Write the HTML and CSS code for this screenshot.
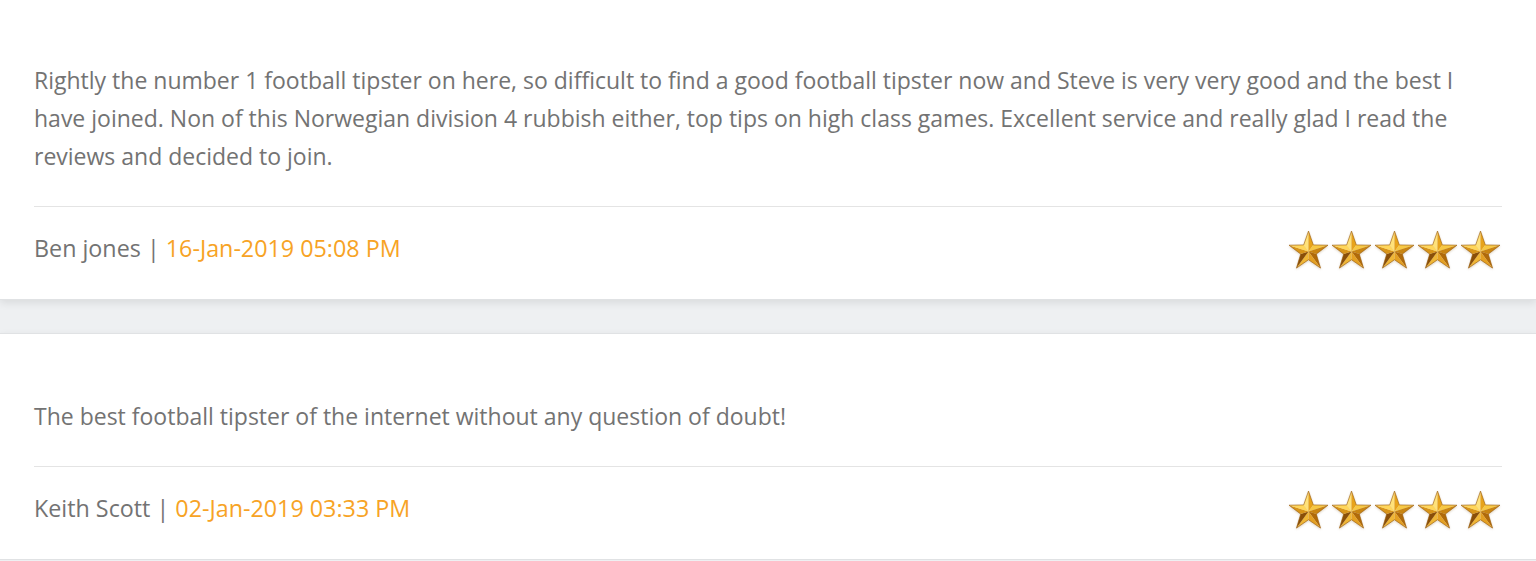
FILE: index.html
```html
<!DOCTYPE html>
<html lang="en">
<head>
<meta charset="utf-8">
<title>Reviews</title>
<link rel="stylesheet" href="styles.css">
</head>
<body>
<svg width="0" height="0" class="defs">
  <defs>
    <g id="star">
      <polygon points="21,21 21,1 16.30,14.53" fill="#ffe27a"/>
      <polygon points="21,21 21,1 25.70,14.53" fill="#e7a31c"/>
      <polygon points="21,21 25.70,14.53 40.02,14.82" fill="#f7c844"/>
      <polygon points="21,21 40.02,14.82 28.61,23.47" fill="#c98512"/>
      <polygon points="21,21 28.61,23.47 32.76,37.18" fill="#b06a0a"/>
      <polygon points="21,21 32.76,37.18 21,29" fill="#e4a022"/>
      <polygon points="21,21 21,29 9.24,37.18" fill="#efb636"/>
      <polygon points="21,21 9.24,37.18 13.39,23.47" fill="#8a4f08"/>
      <polygon points="21,21 13.39,23.47 1.98,14.82" fill="#d8951a"/>
      <polygon points="21,21 1.98,14.82 16.30,14.53" fill="#ffd65a"/>
      <polygon points="21,1 25.70,14.53 40.02,14.82 28.61,23.47 32.76,37.18 21,29 9.24,37.18 13.39,23.47 1.98,14.82 16.30,14.53" fill="none" stroke="#9a5c0a" stroke-width="0.6" stroke-linejoin="round"/>
    </g>
  </defs>
</svg>
<main class="reviews">
  <article class="review">
    <p class="review-text">Rightly the number 1 football tipster on here, so difficult to find a good football tipster now and Steve is very very good and the best I have joined. Non of this Norwegian division 4 rubbish either, top tips on high class games. Excellent service and really glad I read the reviews and decided to join.</p>
    <div class="review-meta">
      <div class="author">Ben jones | <span class="date">16-Jan-2019 05:08 PM</span></div>
      <div class="stars">
        <svg class="star" viewBox="0 0 42 39"><use href="#star"/></svg>
        <svg class="star" viewBox="0 0 42 39"><use href="#star"/></svg>
        <svg class="star" viewBox="0 0 42 39"><use href="#star"/></svg>
        <svg class="star" viewBox="0 0 42 39"><use href="#star"/></svg>
        <svg class="star" viewBox="0 0 42 39"><use href="#star"/></svg>
      </div>
    </div>
  </article>
  <article class="review">
    <p class="review-text">The best football tipster of the internet without any question of doubt!</p>
    <div class="review-meta">
      <div class="author">Keith Scott | <span class="date">02-Jan-2019 03:33 PM</span></div>
      <div class="stars">
        <svg class="star" viewBox="0 0 42 39"><use href="#star"/></svg>
        <svg class="star" viewBox="0 0 42 39"><use href="#star"/></svg>
        <svg class="star" viewBox="0 0 42 39"><use href="#star"/></svg>
        <svg class="star" viewBox="0 0 42 39"><use href="#star"/></svg>
        <svg class="star" viewBox="0 0 42 39"><use href="#star"/></svg>
      </div>
    </div>
  </article>
</main>
</body>
</html>
```
FILE: styles.css
```css
html, body {
  margin: 0;
  padding: 0;
}
body {
  background: #eef0f2;
  font-family: "Open Sans", "Liberation Sans", sans-serif;
  font-weight: 400;
  color: #737373;
  overflow: hidden;
}
.defs {
  position: absolute;
  width: 0;
  height: 0;
}
.reviews {
  display: flex;
  flex-direction: column;
  gap: 33px;
  margin-top: -3px;
}
.review {
  background: #fff;
  padding: 0 34px;
  border-top: 1px solid #e0e2e4;
  border-bottom: 1px solid #e0e2e4;
  box-shadow: 0 3px 8px rgba(0, 0, 0, 0.09);
}
.review-text {
  margin: 0;
  padding: 63px 0 31px;
  font-size: 23px;
  line-height: 38px;
  border-bottom: 1px solid #e4e4e4;
}
.review-meta {
  display: flex;
  justify-content: space-between;
  align-items: center;
  height: 92px;
  padding-bottom: 10px;
  box-sizing: border-box;
}
.author {
  font-size: 23.3px;
  line-height: 30px;
}
.date {
  color: #f7a325;
}
.stars {
  display: flex;
  margin-top: 4px;
}
.star {
  width: 43px;
  height: 40px;
  display: block;
  filter: drop-shadow(0 1px 1px rgba(120, 70, 0, 0.25));
}
```
